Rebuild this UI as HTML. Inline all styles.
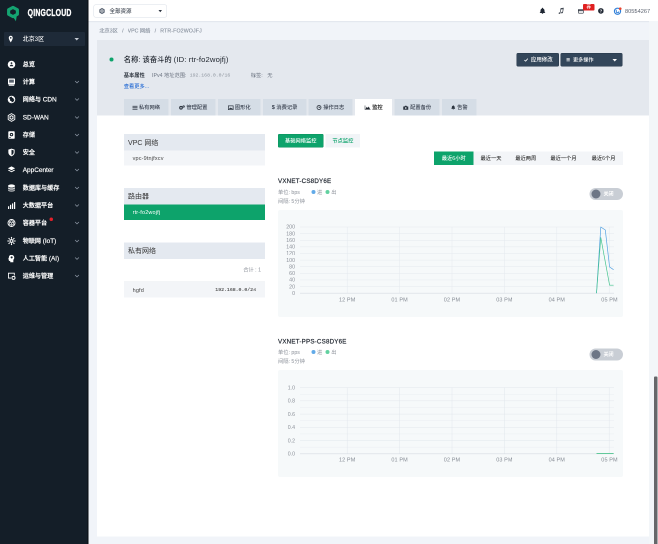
<!DOCTYPE html>
<html lang="zh-CN">
<head>
<meta charset="utf-8">
<title>QingCloud Console</title>
<style>
*{box-sizing:border-box;margin:0;padding:0}
html,body{width:658px;height:544px;overflow:hidden;background:#f1f4f9}
body{font-family:"Liberation Sans","Noto Sans CJK SC",sans-serif;color:#333}
#stage{position:absolute;left:0;top:0;width:1316px;height:1088px;transform:scale(.5);transform-origin:0 0;background:#f1f4f9;overflow:hidden;will-change:transform}
.abs{position:absolute}
.t{position:absolute;white-space:nowrap;line-height:20px;height:20px;margin-top:-10px}
#crumb i{font-style:normal;margin:0 8.3px}
.mono{font-family:"Liberation Mono",monospace}
/* sidebar */
#side{position:absolute;left:0;top:0;width:177px;height:1088px;background:#141e28;border-right:2px solid #070b10}
#side .logo-t{position:absolute;left:55.5px;top:13.4px;font-weight:700;font-size:20px;line-height:24px;color:#fff;transform-origin:0 50%;transform:scaleX(.7);white-space:nowrap;letter-spacing:.2px}
#region{position:absolute;left:8px;top:64px;width:162px;height:28px;background:#1e2a38;border-radius:2px}
.mi{position:absolute;left:0;width:174px;height:36px;margin-top:-18px}
.mi .ic{position:absolute;left:14px;top:9px;width:18px;height:18px}
.mi .lb{position:absolute;left:45.5px;top:8px;line-height:20px;font-size:12.2px;font-weight:500;color:#fff;white-space:nowrap;-webkit-text-stroke:.35px #fff}
.mi .lb em{font-style:normal;font-size:12.9px}
.mi .cv{position:absolute;left:148.5px;top:14px;width:10px;height:8px}
/* topbar */
#top{position:absolute;left:176px;top:0;width:1140px;height:42px;background:#fff;box-shadow:0 1px 3px rgba(40,60,90,.13)}
#sel{position:absolute;left:10.6px;top:8.5px;width:147.2px;height:26.5px;border:1px solid #d9dee6;border-radius:4px;background:#fff}
/* header */
#hdr{position:absolute;left:194px;top:80px;width:1104px;height:151.4px;background:#e4e8ee;z-index:2}
.btn{position:absolute;top:25.8px;height:27.6px;background:#33465a;border:1px solid #27384a;border-radius:2.5px;color:#fff;font-size:10.9px;font-weight:500;line-height:25.6px;white-space:nowrap}
.tab{position:absolute;top:118.2px;height:33.2px;background:#d5dde6;font-size:10.5px;line-height:33px;color:#3a4250;text-align:center;white-space:nowrap;font-weight:500}
.tab.on{background:#fff;color:#222;font-weight:700}
.tab svg{vertical-align:-2px;margin-right:3px}
/* panel */
#panel{position:absolute;left:194px;top:228px;width:1104px;height:845px;background:#fff}
.ch{position:absolute;left:53.6px;width:282.6px;height:32.6px;background:#e4e9f0;font-size:14px;line-height:32.6px;padding-left:8.5px;color:#333}
.cb{position:absolute;left:53.6px;width:282.6px;background:#f3f5f8;font-size:11px;letter-spacing:.33px;color:#444;padding-left:17.6px;white-space:nowrap}
.rt{font-size:10.5px;font-weight:500;text-align:center;color:#333}
.chart{position:absolute;left:362px;width:690px;height:214px;background:#f6f9fa;border-radius:4px}
.tog{position:absolute;left:985px;width:67px;height:24.8px;border-radius:12.4px;background:#c9ced5}
.tog i{position:absolute;left:4.4px;top:3.4px;width:18px;height:18px;border-radius:9px;background:#6d7686}
.tog b{position:absolute;left:28px;top:0;line-height:24.8px;font-size:10px;color:#fff;font-weight:700}
.sm{font-size:10.5px;color:#8a8f98}
svg text{font-family:"Liberation Sans","Noto Sans CJK SC",sans-serif}
</style>
</head>
<body>
<div id="stage">

<!-- ============ TOP BAR ============ -->
<div id="top">
  <div id="sel">
    <svg class="abs" style="left:9px;top:5.5px" width="14" height="14" viewBox="0 0 14 14"><path d="M7 .8 12.4 3.9v6.2L7 13.2 1.6 10.1V3.9Z" fill="#5b6573"/><path d="M7 3.6 9.9 5.3v3.4L7 10.4 4.1 8.700V5.300Z" fill="#fff" opacity=".85"/><path d="M7 5.300 8.500 6.150v1.700L7 8.700 5.500 7.850v-1.700Z" fill="#5b6573"/></svg>
    <span class="t" style="left:31.400px;top:12.500px;font-size:11px;color:#454c57;font-weight:500">全部资源</span>
    <svg class="abs" style="left:129.4px;top:10.700px" width="7" height="4.4" viewBox="0 0 8 5"><path d="M0 0h8L4 5Z" fill="#2c3440"/></svg>
  </div>
  <!-- right icons -->
  <svg class="abs" style="left:902.8px;top:15px" width="12" height="14" viewBox="0 0 12 14"><path d="M6 0.600c.6 0 1 .4 1 1v.5c1.900.5 3 2.100 3 4.100 0 2.300.5 3.300 1.500 4.200v.6H.5v-.6C1.500 9.500 2 8.500 2 6.200c0-2 1.100-3.600 3-4.100v-.5c0-.6.4-1 1-1Zm-1.500 11h3a1.500 1.500 0 0 1-3 0Z" fill="#1f2733"/></svg>
  <svg class="abs" style="left:941px;top:15px" width="12" height="14" viewBox="0 0 12 14"><path d="M4.200 1.200 10.600.6 9 9.800c-.3 1.300-1.500 2.100-2.700 1.900-.9-.2-1.300-1-1-1.800.4-.9 1.500-1.400 2.500-1.100L8.600 3.500 5.100 3.900 4 10.900c-.3 1.300-1.500 2.100-2.700 1.900-.9-.2-1.300-1-1-1.800.4-.9 1.500-1.400 2.500-1.100Z" fill="#1f2733" opacity=".85"/></svg>
  <svg class="abs" style="left:980px;top:18px" width="11.5" height="9" viewBox="0 0 15 12"><rect x=".8" y=".8" width="13.400" height="10.400" rx="1.500" fill="none" stroke="#1f2733" stroke-width="1.600"/><rect x=".8" y="3.300" width="13.400" height="2.400" fill="#1f2733"/></svg>
  <div class="abs" style="left:990px;top:7.500px;width:23px;height:13px;background:#e02020;border-radius:2px;color:#fff;font-size:9px;line-height:13px;text-align:center;font-weight:500">荐</div>
  <svg class="abs" style="left:1019.7px;top:16.200px" width="11.6" height="11.6" viewBox="0 0 13 13"><circle cx="6.500" cy="6.500" r="6.300" fill="#1f2733"/><text x="6.500" y="10" font-size="9.500" font-weight="700" fill="#fff" text-anchor="middle">?</text></svg>
  <svg class="abs" style="left:1051px;top:14px" width="17" height="16" viewBox="0 0 17 16"><circle cx="8" cy="8.500" r="6.200" fill="#fff" stroke="#2f7fd8" stroke-width="2.200"/><path d="M5.500 5.500v3.200c0 1.600 1.100 2.600 2.600 2.600s2.600-1 2.600-2.600" fill="none" stroke="#2f7fd8" stroke-width="1.800"/><circle cx="13.500" cy="3.300" r="2.600" fill="#e8442e"/></svg>
  <span class="t" style="left:1074px;top:21.500px;font-size:11.3px;color:#5d6470">80554267</span>
</div>

<!-- ============ BREADCRUMB ============ -->
<span class="t" id="crumb" style="left:198.500px;top:60.500px;font-size:10.5px;color:#858e9b;-webkit-text-stroke:.2px #858e9b">北京3区<i>/</i>VPC 网络<i>/</i><span style="letter-spacing:.25px">RTR-FO2WOJFJ</span></span>

<!-- ============ HEADER PANEL ============ -->
<div id="hdr">
  <div class="abs" style="left:24.500px;top:35.200px;width:8px;height:8px;border-radius:4px;background:#0da36b"></div>
  <span class="t" id="ttl" style="left:53.600px;top:39.200px;font-size:14.6px;font-weight:500;color:#1d232c">名称: 该奋斗的 <span style="font-size:15.4px;letter-spacing:.2px">(ID: rtr-fo2wojfj)</span></span>
  <span class="t" style="left:53.600px;top:70px;font-size:10.500px;font-weight:700;color:#2c333d">基本属性</span>
  <span class="t" style="left:110px;top:70px;font-size:10.500px;color:#6b7380">IPv4 地址范围:</span>
  <span class="t mono" style="left:185.400px;top:70.500px;font-size:9.670px;color:#8b929c">192.168.0.0/16</span>
  <span class="t" style="left:307.600px;top:70px;font-size:10.500px;color:#6b7380">标签: <span style="margin-left:6px">无</span></span>
  <span class="t" style="left:53.600px;top:92px;font-size:10.500px;color:#2a6ed4;font-weight:500">查看更多...</span>

  <div class="btn" style="left:839.200px;width:85px"><svg class="abs" style="left:13.5px;top:9px" width="8.5" height="7.6" viewBox="0 0 10 9"><path d="M1 4.800 3.800 7.500 9 1.500" fill="none" stroke="#fff" stroke-width="2"/></svg><span class="abs" style="left:27.6px;top:0">应用修改</span></div>
  <div class="btn" style="left:927.400px;width:123.200px"><svg class="abs" style="left:10.8px;top:9.6px" width="6.6" height="6.6" viewBox="0 0 8 8"><path d="M0 1h8M0 4h8M0 7h8" stroke="#fff" stroke-width="1.600"/></svg><span class="abs" style="left:23.6px;top:0;font-size:10.3px">更多操作</span><svg class="abs" style="left:103px;top:11.500px" width="9" height="5" viewBox="0 0 9 5"><path d="M0 0h9L4.500 5Z" fill="#fff"/></svg></div>

  <!-- tabs -->
  <div class="tab" style="left:54px;width:89px"><svg width="10" height="9" viewBox="0 0 10 9"><path d="M0 1.500h10M0 4.500h10M0 7.500h10" stroke="#2b333e" stroke-width="1.600"/></svg>私有网络</div>
  <div class="tab" style="left:147.800px;width:88.800px"><svg width="12" height="10" viewBox="0 0 12 10"><circle cx="4" cy="5.500" r="2.600" fill="none" stroke="#2b333e" stroke-width="2.200"/><circle cx="9.300" cy="3" r="1.500" fill="none" stroke="#2b333e" stroke-width="1.600"/></svg>管理配置</div>
  <div class="tab" style="left:242px;width:85px"><svg width="11" height="9" viewBox="0 0 11 9"><rect x=".7" y=".7" width="9.600" height="7.600" fill="none" stroke="#2b333e" stroke-width="1.400"/><path d="M2 7 4.500 4 6.300 5.800 7.500 4.800 9.300 7Z" fill="#2b333e"/></svg>图形化</div>
  <div class="tab" style="left:331.600px;width:87px"><b style="margin-right:3px;font-size:11px">$</b>消费记录</div>
  <div class="tab" style="left:422.800px;width:88.200px"><svg width="10" height="10" viewBox="0 0 10 10"><circle cx="5" cy="5" r="4" fill="none" stroke="#2b333e" stroke-width="1.600"/><path d="M5 2.500V5.300H7.200" fill="none" stroke="#2b333e" stroke-width="1.200"/></svg>操作日志</div>
  <div class="tab on" style="left:516.400px;width:73.600px"><svg width="12" height="9" viewBox="0 0 12 9"><path d="M.5 0V8.500H12V7.500H1.500V0Z" fill="#1d232c"/><path d="M2 7.300 4.500 2.500 6.500 5 8.500 2 11 7.300Z" fill="#1d232c"/></svg>监控</div>
  <div class="tab" style="left:595.400px;width:89.600px"><svg width="11" height="9" viewBox="0 0 11 9"><path d="M.5 2h2.500L4 .5h3L8 2h2.500V8.500H.5Z" fill="#2b333e"/><circle cx="5.500" cy="5" r="1.700" fill="#d5dde6"/></svg>配置备份</div>
  <div class="tab" style="left:690.400px;width:68.800px"><svg width="9" height="10" viewBox="0 0 12 14"><path d="M6 0.600c.6 0 1 .4 1 1v.5c1.900.5 3 2.100 3 4.100 0 2.300.5 3.300 1.500 4.200v.6H.5v-.6C1.500 9.500 2 8.500 2 6.200c0-2 1.100-3.600 3-4.100v-.5c0-.6.4-1 1-1Zm-1.500 11h3a1.500 1.500 0 0 1-3 0Z" fill="#2b333e"/></svg>告警</div>
</div>

<!-- ============ WHITE PANEL ============ -->
<div id="panel">
  <!-- left column -->
  <div class="ch" style="top:39.800px;height:33.400px;line-height:34.2px">VPC 网络</div>
  <div class="cb" style="top:73.200px;height:30px;line-height:30px">vpc-9tnjfxcv</div>

  <div class="ch" style="top:148px">路由器</div>
  <div class="cb" style="top:180.600px;height:31.600px;line-height:31.600px;background:#0da36b;color:#fff;font-weight:500">rtr-fo2wojfj</div>

  <div class="ch" style="top:257px">私有网络</div>
  <span class="t" style="left:290px;width:38px;text-align:right;top:310.600px;font-size:10.5px;color:#8a8f98">合计 : 1</span>
  <div class="cb" style="top:334.800px;height:32.600px;line-height:32.600px;border-top:1px solid #e6eaef">hgfd<span class="mono abs" style="left:183px;top:0;font-size:9.700px;color:#333;letter-spacing:0;-webkit-text-stroke:.12px #333">192.168.0.0/24</span></div>

  <!-- right column : buttons -->
  <div class="abs rt" style="left:362px;top:39.800px;width:90.800px;height:27.400px;line-height:25.800px;background:#0da36b;color:#fff;border-radius:2px;border:1px solid #0a905d">基础网络监控</div>
  <div class="abs rt" style="left:457.200px;top:39.800px;width:69.200px;height:27.400px;line-height:27.400px;background:#f1f4f7;color:#0da36b">节点监控</div>

  <!-- time range -->
  <div class="abs" style="left:674px;top:75.400px;width:378px;height:26.600px;background:#f3f5f8"></div>
  <div class="abs rt" style="left:674px;top:75.400px;width:79px;height:26.600px;line-height:26.600px;background:#0da36b;color:#fff">最近6小时</div>
  <div class="abs rt" style="left:753px;top:75.400px;width:70px;line-height:26.600px">最近一天</div>
  <div class="abs rt" style="left:822.400px;top:75.400px;width:70px;line-height:26.600px">最近两周</div>
  <div class="abs rt" style="left:893px;top:75.400px;width:80px;line-height:26.600px">最近一个月</div>
  <div class="abs rt" style="left:973.200px;top:75.400px;width:80px;line-height:26.600px">最近6个月</div>

  <!-- chart 1 header -->
  <span class="t" style="left:362px;top:133.600px;font-size:12.4px;font-weight:400;-webkit-text-stroke:.4px #262c35;letter-spacing:.42px;color:#262c35">VXNET-CS8DY6E</span>
  <span class="t sm" style="left:362px;top:156px">单位: bps</span>
  <i class="abs" style="left:428.800px;top:152px;width:8px;height:8px;border-radius:4px;background:#62aae8"></i>
  <span class="t sm" style="left:440px;top:156px">进</span>
  <i class="abs" style="left:457.200px;top:152px;width:8px;height:8px;border-radius:4px;background:#62d1a0"></i>
  <span class="t sm" style="left:468.500px;top:156px">出</span>
  <span class="t sm" style="left:362px;top:173.600px">间隔: 5分钟</span>
  <div class="tog" style="top:147.600px"><i></i><b>关闭</b></div>

  <div class="chart" style="top:192px">
    <svg width="689" height="214" viewBox="0 0 689 214">
      <g stroke="#e4e9ee" stroke-width="1" fill="none">
        <path d="M44 34H672M44 47.240H672M44 60.480H672M44 73.720H672M44 86.960H672M44 100.200H672M44 113.440H672M44 126.680H672M44 139.920H672M44 153.160H672"/>
        <path d="M138.400 34V166.400M243.200 34V166.400M348 34V166.400M452.800 34V166.400M557.600 34V166.400M662.400 34V166.400"/>
      </g>
      <path d="M44 166.400H672" stroke="#d5dbe2" stroke-width="1.200"/>
      <g font-size="10.5" fill="#8a8f98" text-anchor="end">
        <text x="34" y="37.400">200</text><text x="34" y="50.640">180</text><text x="34" y="63.880">160</text><text x="34" y="77.120">140</text><text x="34" y="90.360">120</text><text x="34" y="103.600">100</text><text x="34" y="116.840">80</text><text x="34" y="130.080">60</text><text x="34" y="143.320">40</text><text x="34" y="156.560">20</text><text x="34" y="169.800">0</text>
      </g>
      <g font-size="11" fill="#858b94" text-anchor="middle" letter-spacing=".2">
        <text x="138.400" y="183.400">12 PM</text><text x="243.200" y="183.400">01 PM</text><text x="348" y="183.400">02 PM</text><text x="452.800" y="183.400">03 PM</text><text x="557.600" y="183.400">04 PM</text><text x="663" y="183.400">05 PM</text>
      </g>
      <path d="M637 166.400 645.600 34 654.600 40 663.200 114 671.200 119.400" fill="none" stroke="#4f9fe0" stroke-width="1.350" stroke-linejoin="round"/>
      <path d="M637 166.400 645.600 55.200 663.200 150.400 671.200 150.400" fill="none" stroke="#42c38c" stroke-width="1.350" stroke-linejoin="round"/>
    </svg>
  </div>

  <!-- chart 2 header -->
  <span class="t" style="left:362px;top:454.600px;font-size:12.4px;font-weight:400;-webkit-text-stroke:.4px #262c35;letter-spacing:.42px;color:#262c35">VXNET-PPS-CS8DY6E</span>
  <span class="t sm" style="left:362px;top:476px">单位: pps</span>
  <i class="abs" style="left:428.800px;top:472px;width:8px;height:8px;border-radius:4px;background:#62aae8"></i>
  <span class="t sm" style="left:440px;top:476px">进</span>
  <i class="abs" style="left:457.200px;top:472px;width:8px;height:8px;border-radius:4px;background:#62d1a0"></i>
  <span class="t sm" style="left:468.500px;top:476px">出</span>
  <span class="t sm" style="left:362px;top:494px">间隔: 5分钟</span>
  <div class="tog" style="top:468.600px"><i></i><b>关闭</b></div>

  <div class="chart" style="top:512px">
    <svg width="689" height="214" viewBox="0 0 689 214">
      <g stroke="#e9edf1" stroke-width="1" fill="none">
        <path d="M44 48.440H672M44 74.920H672M44 101.400H672M44 127.880H672M44 154.360H672"/>
      </g>
      <g stroke="#e1e6ec" stroke-width="1" fill="none">
        <path d="M44 35.200H672M44 61.680H672M44 88.160H672M44 114.640H672M44 141.120H672"/>
        <path d="M138.400 35.200V167.600M243.200 35.200V167.600M348 35.200V167.600M452.800 35.200V167.600M557.600 35.200V167.600M662.400 35.200V167.600"/>
      </g>
      <path d="M44 167.600H672" stroke="#d5dbe2" stroke-width="1.200"/>
      <g font-size="10.5" fill="#8a8f98" text-anchor="end">
        <text x="34" y="38.600">1.0</text><text x="34" y="65.080">0.8</text><text x="34" y="91.560">0.6</text><text x="34" y="118.040">0.4</text><text x="34" y="144.520">0.2</text><text x="34" y="171">0.0</text>
      </g>
      <g font-size="11" fill="#858b94" text-anchor="middle" letter-spacing=".2">
        <text x="138.400" y="183.400">12 PM</text><text x="243.200" y="183.400">01 PM</text><text x="348" y="183.400">02 PM</text><text x="452.800" y="183.400">03 PM</text><text x="557.600" y="183.400">04 PM</text><text x="663" y="183.400">05 PM</text>
      </g>
      <path d="M637 167H671.200" fill="none" stroke="#62c99b" stroke-width="1.800"/>
    </svg>
  </div>
</div>

<!-- scrollbar thumb -->
<div class="abs" style="left:1298px;top:42px;width:18px;height:1046px;background:#f3f6f9"></div>
<div class="abs" style="left:1308px;top:753px;width:6.6px;height:350px;border-radius:2px;background:#66676a"></div>

<!-- ============ SIDEBAR ============ -->
<div id="side">
  <svg class="abs" style="left:12.2px;top:10.6px" width="30" height="34" viewBox="0 0 30 34" id="logo">
    <path d="M14 3.800 22.800 8.400V17.600L14 22.200 5.200 17.600V8.400Z" fill="none" stroke="#14a471" stroke-width="6.200" stroke-linejoin="round"/>
    <path d="M14.500 23.500 21.500 21 19.800 31.500Z" fill="#14a471"/>
  </svg>
  <svg class="abs" style="left:50px;top:10px" width="110" height="30" viewBox="0 0 110 30"><text id="logot" x="0" y="0" transform="translate(5.300 21.800) scale(.69 1)" font-size="20" font-weight="700" fill="#fff" stroke="#fff" stroke-width=".7" letter-spacing=".6">QINGCLOUD</text></svg>
  <div id="region">
    <svg class="abs" style="left:8.6px;top:6.500px" width="9" height="14.5" viewBox="0 0 10 15" preserveAspectRatio="none"><path d="M5 .5C2.400.5.600 2.400.600 4.900.600 8 5 14.300 5 14.300S9.400 8 9.400 4.900C9.400 2.400 7.600.5 5 .5Z" fill="#fff"/><circle cx="5" cy="4.900" r="1.700" fill="#1e2a38"/></svg>
    <span class="t" style="left:37.500px;top:14px;font-size:12px;font-weight:500;color:#fff">北京3区</span>
    <svg class="abs" style="left:141px;top:12px" width="9" height="5" viewBox="0 0 9 5"><path d="M0 0h9L4.500 5Z" fill="#c6ccd4"/></svg>
  </div>
  <div id="menu">
<div class="mi" style="top:128.6px"><svg class="ic" viewBox="0 0 18 18"><circle cx="9" cy="9" r="7.500" fill="#fff"/><circle cx="9" cy="6.200" r="1.700" fill="#141e28"/><path d="M5.500 12.500c0-2 1.500-3.300 3.500-3.300s3.500 1.300 3.500 3.300Z" fill="#141e28"/></svg><span class="lb">总览</span></div>
<div class="mi" style="top:163.9px"><svg class="ic" viewBox="0 0 18 18"><rect x="2" y="2" width="14" height="12" rx="1.500" fill="#fff"/><rect x="4.300" y="4.300" width="9.400" height="6" fill="#59626e"/><rect x="3.500" y="14.500" width="11" height="2" rx=".6" fill="#fff"/></svg><span class="lb">计算</span><svg class="cv" viewBox="0 0 10 8"><path d="M1.200 2 5 5.800 8.800 2" fill="none" stroke="#8d97a4" stroke-width="1.500"/></svg></div>
<div class="mi" style="top:199.2px"><svg class="ic" viewBox="0 0 18 18"><circle cx="9" cy="9" r="6.600" fill="none" stroke="#fff" stroke-width="1.900"/><path d="M3.500 6.500c2 .3 3 1.500 2.600 3.200-.3 1.500.8 2.300 2 2.400 1 .1 1.500 1.500.9 3.200L5 13.500 2.800 9.500Z" fill="#fff"/><path d="M10 2.800c-.6 1.500 0 2.600 1.300 2.900 1.500.4 2.200 1.300 1.800 2.800l2.200.8.400-3.300-2.500-2.700Z" fill="#fff"/></svg><span class="lb">网络与 <em>CDN</em></span><svg class="cv" viewBox="0 0 10 8"><path d="M1.200 2 5 5.800 8.800 2" fill="none" stroke="#8d97a4" stroke-width="1.500"/></svg></div>
<div class="mi" style="top:234.5px"><svg class="ic" viewBox="0 0 18 18"><path d="M9 1.200 15.600 5v8L9 16.800 2.400 13V5Z" fill="none" stroke="#fff" stroke-width="1.700"/><path d="M9 4.200 13 6.500v5L9 13.800 5 11.500v-5Z" fill="#fff"/><path d="M9 6.500 11 7.700v2.600L9 11.500 7 10.300V7.700Z" fill="#141e28"/></svg><span class="lb"><em>SD-WAN</em></span><svg class="cv" viewBox="0 0 10 8"><path d="M1.200 2 5 5.800 8.800 2" fill="none" stroke="#8d97a4" stroke-width="1.500"/></svg></div>
<div class="mi" style="top:269.8px"><svg class="ic" viewBox="0 0 18 18"><rect x="2.600" y="1.600" width="12.800" height="14.800" rx="1.500" fill="#fff"/><circle cx="9" cy="8.200" r="3.400" fill="#141e28"/><circle cx="9" cy="8.200" r="1.300" fill="#fff"/><rect x="4.600" y="13.300" width="3" height="1.400" fill="#141e28"/></svg><span class="lb">存储</span><svg class="cv" viewBox="0 0 10 8"><path d="M1.200 2 5 5.800 8.800 2" fill="none" stroke="#8d97a4" stroke-width="1.500"/></svg></div>
<div class="mi" style="top:305.1px"><svg class="ic" viewBox="0 0 18 18"><path d="M9 1.300 15.300 3.200V8.600c0 4-2.700 6.700-6.300 8.200C5.400 15.300 2.700 12.600 2.700 8.600V3.200Z" fill="#fff"/><path d="M9 3.400V14.500c2.500-1.200 4.300-3.200 4.300-6V4.700Z" fill="#141e28"/></svg><span class="lb">安全</span><svg class="cv" viewBox="0 0 10 8"><path d="M1.200 2 5 5.800 8.800 2" fill="none" stroke="#8d97a4" stroke-width="1.500"/></svg></div>
<div class="mi" style="top:340.4px"><svg class="ic" viewBox="0 0 18 18"><path d="M9 1.800 16.200 5.600 9 9.400 1.800 5.600Z" fill="#fff"/><path d="M3.800 8.600 1.800 9.700 9 13.500 16.200 9.700 14.200 8.600 9 11.400Z" fill="#fff"/><path d="M3.800 12.400 1.800 13.500 9 17.300 16.200 13.500 14.200 12.400 9 15.200Z" fill="#fff" opacity="0"/></svg><span class="lb"><em>AppCenter</em></span><svg class="cv" viewBox="0 0 10 8"><path d="M1.200 2 5 5.800 8.800 2" fill="none" stroke="#8d97a4" stroke-width="1.500"/></svg></div>
<div class="mi" style="top:375.7px"><svg class="ic" viewBox="0 0 18 18"><ellipse cx="9" cy="5" rx="7" ry="3.200" fill="#fff"/><path d="M2 7.200c1.200 1.500 3.800 2.300 7 2.300s5.800-.8 7-2.300v3c-1.200 1.500-3.800 2.300-7 2.300s-5.800-.8-7-2.300Z" fill="#fff" opacity=".8"/><path d="M2 11.400c1.200 1.500 3.800 2.300 7 2.300s5.800-.8 7-2.300v2.400c-.8 1.700-3.800 2.600-7 2.600s-6.200-.9-7-2.600Z" fill="#fff" opacity=".65"/></svg><span class="lb">数据库与缓存</span><svg class="cv" viewBox="0 0 10 8"><path d="M1.200 2 5 5.800 8.800 2" fill="none" stroke="#8d97a4" stroke-width="1.500"/></svg></div>
<div class="mi" style="top:411.0px"><svg class="ic" viewBox="0 0 18 18"><rect x="2" y="10.500" width="2.400" height="5.500" rx=".5" fill="#fff"/><rect x="6" y="7.500" width="2.400" height="8.500" rx=".5" fill="#fff"/><rect x="10" y="4.800" width="2.400" height="11.200" rx=".5" fill="#fff"/><rect x="14" y="2" width="2.400" height="14" rx=".5" fill="#fff"/></svg><span class="lb">大数据平台</span><svg class="cv" viewBox="0 0 10 8"><path d="M1.200 2 5 5.800 8.800 2" fill="none" stroke="#8d97a4" stroke-width="1.500"/></svg></div>
<div class="mi" style="top:446.3px"><svg class="ic" viewBox="0 0 18 18"><circle cx="9" cy="9" r="7" fill="none" stroke="#fff" stroke-width="1.800"/><path d="M9 4.300 13.200 6.600v4.800L9 13.700 4.800 11.400V6.600Z" fill="none" stroke="#fff" stroke-width="1.300"/><path d="M4.800 6.600 9 9l4.200-2.400M9 9v4.700" fill="none" stroke="#fff" stroke-width="1.300"/></svg><span class="lb">容器平台</span><i class="abs" style="left:98.500px;top:6.500px;width:7px;height:7px;border-radius:3.500px;background:#e5202a"></i><svg class="cv" viewBox="0 0 10 8"><path d="M1.200 2 5 5.800 8.800 2" fill="none" stroke="#8d97a4" stroke-width="1.500"/></svg></div>
<div class="mi" style="top:481.6px"><svg class="ic" viewBox="0 0 18 18"><circle cx="9" cy="9" r="2.600" fill="none" stroke="#fff" stroke-width="1.600"/><g stroke="#fff" stroke-width="1.500"><path d="M9 1.500V6M9 12v4.500M1.500 9H6M12 9h4.500M3.700 3.700 6.800 6.800M11.200 11.200l3.100 3.100M14.300 3.700 11.200 6.800M6.800 11.200 3.700 14.300"/></g><g fill="#fff"><circle cx="9" cy="2" r="1.300"/><circle cx="9" cy="16" r="1.300"/><circle cx="2" cy="9" r="1.300"/><circle cx="16" cy="9" r="1.300"/><circle cx="4" cy="4" r="1.200"/><circle cx="14" cy="14" r="1.200"/><circle cx="14" cy="4" r="1.200"/><circle cx="4" cy="14" r="1.200"/></g></svg><span class="lb">物联网 <em>(IoT)</em></span><svg class="cv" viewBox="0 0 10 8"><path d="M1.200 2 5 5.800 8.800 2" fill="none" stroke="#8d97a4" stroke-width="1.500"/></svg></div>
<div class="mi" style="top:516.9px"><svg class="ic" viewBox="0 0 18 18"><path d="M8.500 1.600c3.600 0 6 2.500 6 5.700 0 2-.8 3.300-1.800 4.400V16.500H6.500V14H5c-.9 0-1.400-.5-1.400-1.400V10.800L2.300 10.200 3.700 7.500C3.900 4 5.600 1.600 8.500 1.600Z" fill="#fff"/><circle cx="9.300" cy="6.800" r="2.100" fill="#141e28"/></svg><span class="lb">人工智能 <em>(AI)</em></span><svg class="cv" viewBox="0 0 10 8"><path d="M1.200 2 5 5.800 8.800 2" fill="none" stroke="#8d97a4" stroke-width="1.500"/></svg></div>
<div class="mi" style="top:552.2px"><svg class="ic" viewBox="0 0 18 18"><path d="M2 2.500H15.500V8H13.800V4.200H3.700V12.300H8V14H2Z" fill="#fff"/><circle cx="13" cy="12.800" r="3.100" fill="none" stroke="#fff" stroke-width="1.900"/></svg><span class="lb">运维与管理</span><svg class="cv" viewBox="0 0 10 8"><path d="M1.200 2 5 5.800 8.800 2" fill="none" stroke="#8d97a4" stroke-width="1.500"/></svg></div>
</div>
</div>

</div>
</body>
</html>
